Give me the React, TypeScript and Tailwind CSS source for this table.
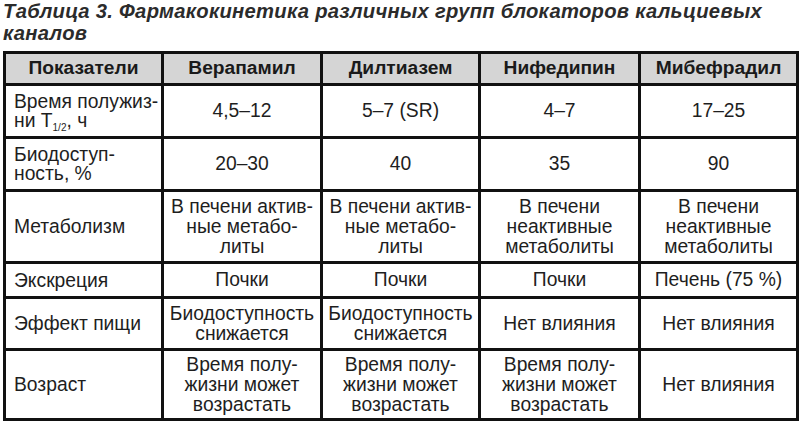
const rows: { label: React.ReactNode; cells: string[][]; h: string }[] = [
  {
    label: (
      <>
        Время полужиз-
        <br />
        ни T
        <sub className="text-[10px] relative top-[4px]">1/2</sub>, ч
      </>
    ),
    cells: [["4,5–12"], ["5–7 (SR)"], ["4–7"], ["17–25"]],
    h: "h-[50px]",
  },
  {
    label: (
      <>
        Биодоступ-
        <br />
        ность, %
      </>
    ),
    cells: [["20–30"], ["40"], ["35"], ["90"]],
    h: "h-[50px]",
  },
  {
    label: "Метаболизм",
    cells: [
      ["В печени актив-", "ные метабо-", "литы"],
      ["В печени актив-", "ные метабо-", "литы"],
      ["В печени", "неактивные", "метаболиты"],
      ["В печени", "неактивные", "метаболиты"],
    ],
    h: "h-[69px]",
  },
  {
    label: "Экскреция",
    cells: [["Почки"], ["Почки"], ["Почки"], ["Печень (75 %)"]],
    h: "h-[32px]",
  },
  {
    label: "Эффект пищи",
    cells: [
      ["Биодоступность", "снижается"],
      ["Биодоступность", "снижается"],
      ["Нет влияния"],
      ["Нет влияния"],
    ],
    h: "h-[49px]",
  },
  {
    label: "Возраст",
    cells: [
      ["Время полу-", "жизни может", "возрастать"],
      ["Время полу-", "жизни может", "возрастать"],
      ["Время полу-", "жизни может", "возрастать"],
      ["Нет влияния"],
    ],
    h: "h-[67px]",
  },
];

const headers = ["Показатели", "Верапамил", "Дилтиазем", "Нифедипин", "Мибефрадил"];

export default function App() {
  return (
    <div className="w-[800px] h-[426px] bg-white overflow-hidden font-['Liberation_Sans',Arial,sans-serif] text-[#1e1e1e]">
      <h1 className="pl-[3px] pt-0 text-[20.2px] leading-[22px] font-bold italic text-[#2b2b2b] tracking-[0.3px]">
        Таблица 3. Фармакокинетика различных групп блокаторов кальциевых
        <br />
        каналов
      </h1>
      <div className="mt-[7px] ml-[3px] w-[796px] bg-[#111] p-[3px] grid grid-cols-[155px_156px_155px_157px_155px] gap-[3px]">
        {headers.map((h) => (
          <div
            key={h}
            className="h-[29px] bg-[#d5d5d5] flex items-center justify-center text-[19.2px] font-bold text-[#1a1a1a]"
          >
            {h}
          </div>
        ))}
        {rows.map((r, i) => (
          <div key={i} className="contents">
            <div
              className={`${r.h} bg-white flex items-center pl-[8px] text-[19.3px] leading-[19px]`}
            >
              <span className="whitespace-nowrap">{r.label}</span>
            </div>
            {r.cells.map((c, j) => (
              <div
                key={j}
                className={`${r.h} bg-white flex flex-col items-center justify-center text-center text-[19.3px] leading-[20px]`}
              >
                {c.map((line, k) => (
                  <span key={k} className="whitespace-nowrap">
                    {line}
                  </span>
                ))}
              </div>
            ))}
          </div>
        ))}
      </div>
    </div>
  );
}
